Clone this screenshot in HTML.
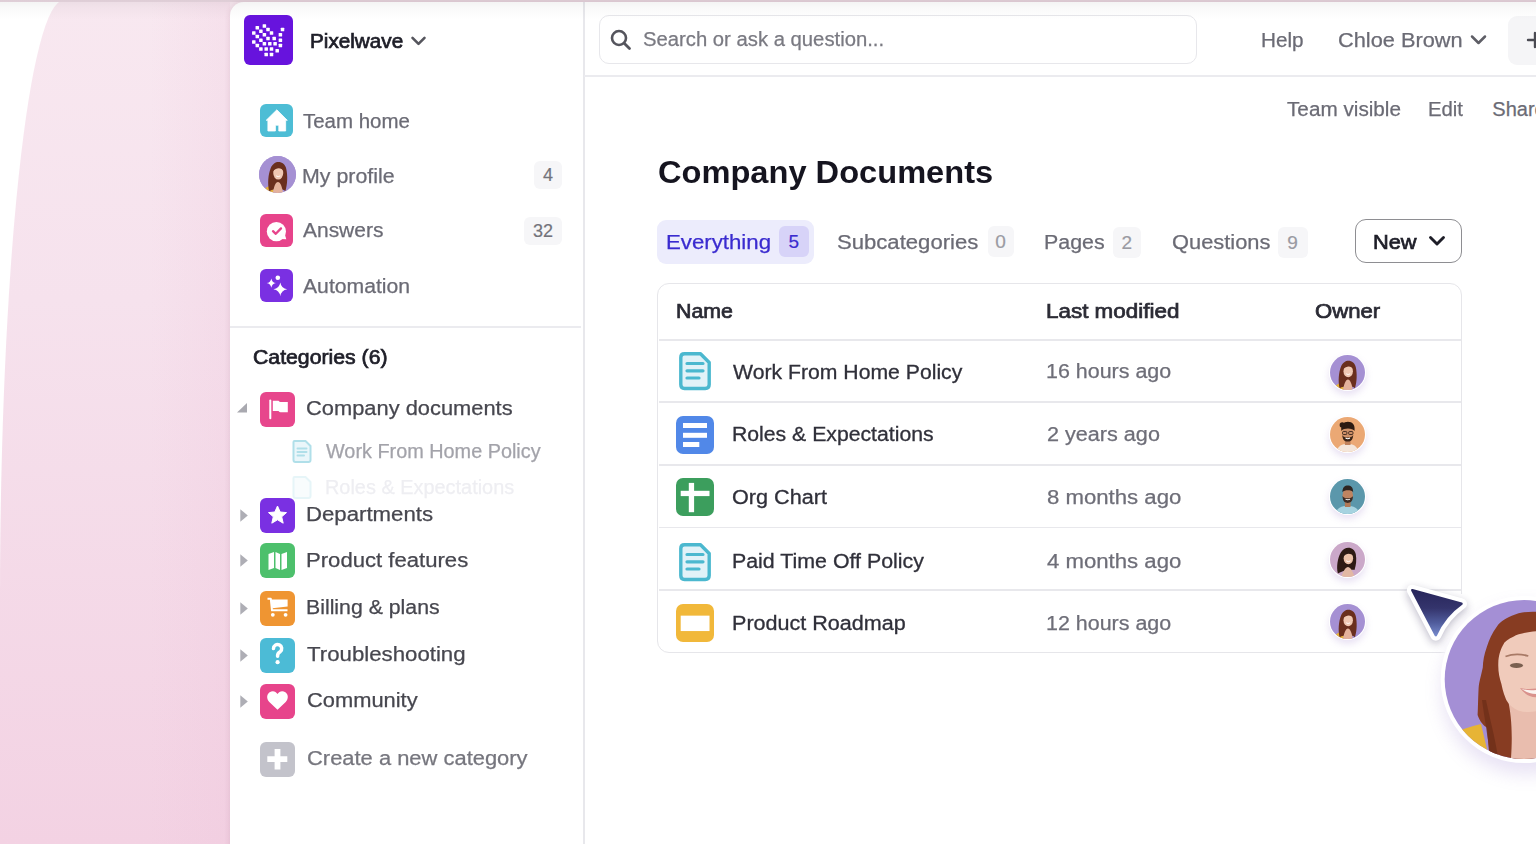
<!DOCTYPE html>
<html><head><meta charset="utf-8"><style>
*{box-sizing:border-box;margin:0;padding:0}
html,body{width:1536px;height:844px;overflow:hidden;background:#fff}
body{position:relative;font-family:"Liberation Sans",sans-serif}
#root{position:absolute;left:0;top:0;width:1536px;height:844px;overflow:hidden}
.t{position:absolute;white-space:nowrap;line-height:20px;font-size:20px;transform-origin:0 0}
.ic{position:absolute;border-radius:6px}
.ic svg,.av svg{position:absolute;left:0;top:0;width:100%;height:100%}
#pink{position:absolute;left:0;top:0;width:300px;height:844px;
 background:linear-gradient(180deg,#f8e8f0 0px,#f6e2ed 300px,#f3d2e3 844px);
 border-top-left-radius:64px 600px}
#pinkedge{position:absolute;left:150px;top:0;width:80px;height:844px;background:linear-gradient(90deg,rgba(236,190,215,0),rgba(236,190,215,.18))}
#topstrip{position:absolute;left:0;top:0;width:1536px;height:2px;background:#ead8e1}
#topshade{position:absolute;left:0;top:0;width:1536px;height:20px;background:linear-gradient(180deg,rgba(0,0,0,.05),rgba(0,0,0,.025) 40%,rgba(0,0,0,0));z-index:50}
#win{position:absolute;left:230px;top:2px;width:1400px;height:900px;background:#fff;border-top-left-radius:14px;box-shadow:-1px 0 5px rgba(120,60,90,.10)}
.ln{position:absolute;background:#ebebef}
.nav{color:#6b6b75}
.cat{color:#47474f}
.badge{position:absolute;background:#f6f6f8;border-radius:6px;color:#73737b;font-size:18px;line-height:28px;text-align:center;-webkit-text-stroke:.2px currentColor}
.av{position:absolute;border-radius:50%;overflow:hidden}
.row{color:#30303a}
.date{color:#6e6e78}
.hd{color:#2b2b35}
</style></head><body><div id="root">
<div id="pink"></div><div id="pinkedge"></div><div id="topstrip"></div><div id="win"></div>

<div class="ln" style="left:583px;top:2px;width:1.5px;height:842px;background:#e8e8ec"></div>
<div class="ln" style="left:230px;top:326px;width:351px;height:1.5px"></div>
<div class="ln" style="left:584px;top:75px;width:952px;height:1.5px"></div>

<div class="ic" style="left:244px;top:15px;width:49px;height:50px;background:#6713dd;border-radius:6px"><svg viewBox="0 0 49 50"><rect x="18.65" y="9.25" width="3.5" height="3.5" rx=".5" fill="#fff"/><rect x="11.55" y="10.95" width="3.5" height="3.5" rx=".5" fill="#fff"/><rect x="22.25" y="12.75" width="3.5" height="3.5" rx=".5" fill="#fff"/><rect x="36.75" y="12.75" width="3.5" height="3.5" rx=".5" fill="#fff"/><rect x="15.15" y="14.55" width="3.5" height="3.5" rx=".5" fill="#fff"/><rect x="8.05" y="16.25" width="3.5" height="3.5" rx=".5" fill="#fff"/><rect x="25.75" y="16.25" width="3.5" height="3.5" rx=".5" fill="#fff"/><rect x="18.65" y="18.05" width="3.5" height="3.5" rx=".5" fill="#fff"/><rect x="34.65" y="18.05" width="3.5" height="3.5" rx=".5" fill="#fff"/><rect x="11.55" y="19.85" width="3.5" height="3.5" rx=".5" fill="#fff"/><rect x="22.25" y="21.65" width="3.5" height="3.5" rx=".5" fill="#fff"/><rect x="28.45" y="21.65" width="3.5" height="3.5" rx=".5" fill="#fff"/><rect x="15.15" y="23.45" width="3.5" height="3.5" rx=".5" fill="#fff"/><rect x="34.65" y="23.45" width="3.5" height="3.5" rx=".5" fill="#fff"/><rect x="8.05" y="25.25" width="3.5" height="3.5" rx=".5" fill="#fff"/><rect x="18.65" y="26.95" width="3.5" height="3.5" rx=".5" fill="#fff"/><rect x="24.05" y="26.95" width="3.5" height="3.5" rx=".5" fill="#fff"/><rect x="29.35" y="26.95" width="3.5" height="3.5" rx=".5" fill="#fff"/><rect x="11.55" y="28.75" width="3.5" height="3.5" rx=".5" fill="#fff"/><rect x="34.65" y="28.75" width="3.5" height="3.5" rx=".5" fill="#fff"/><rect x="15.15" y="32.25" width="3.5" height="3.5" rx=".5" fill="#fff"/><rect x="20.45" y="32.25" width="3.5" height="3.5" rx=".5" fill="#fff"/><rect x="25.75" y="32.25" width="3.5" height="3.5" rx=".5" fill="#fff"/><rect x="31.45" y="34.05" width="3.5" height="3.5" rx=".5" fill="#fff"/><rect x="20.45" y="37.65" width="3.5" height="3.5" rx=".5" fill="#fff"/><rect x="25.75" y="37.65" width="3.5" height="3.5" rx=".5" fill="#fff"/></svg></div>
<svg style="position:absolute;left:410px;top:35px" width="17" height="12" viewBox="0 0 17 12"><path d="M2.5 2.8 L8.5 8.8 L14.5 2.8" fill="none" stroke="#55555d" stroke-width="2.6" stroke-linecap="round" stroke-linejoin="round"/></svg>
<div class="ic" style="left:260px;top:104px;width:33px;height:33px;background:#4dbdd5">
<svg viewBox="0 0 33 33"><path d="M16.85 5.8 L27.3 16.3 L25.65 16.3 L25.65 27 L18.8 27 L18.8 21.2 L15.4 21.2 L15.4 27 L7.9 27 L7.9 16.3 L6.2 16.3 Z" fill="#fff" stroke="#fff" stroke-width=".8" stroke-linejoin="round"/></svg></div>
<div class="av" style="left:258.5px;top:156px;width:37px;height:37px;background:#a792d2"><svg viewBox="0 0 40 40"><rect width="40" height="40" fill="#a590d3"/><path d="M3 40 C6 34 10 32 15 31.5 L16 40 Z" fill="#e6b23a"/><path d="M11 38 C9 30 10 20 12.5 13.5 C14.5 8.5 18 6.5 21 6.5 C25 6.5 28.5 9 29.5 14 C31 21 31 30 28.5 38 C26 35 16 35 11 38 Z" fill="#6a2f1e"/><path d="M15 40 C16 33 18 28 20.5 28 C23 28 25 33 26 40 Z" fill="#e4b29c"/><ellipse cx="20.8" cy="18.5" rx="5.4" ry="7" fill="#f0c8b3"/><path d="M15 16.5 C15.5 11 18 9.5 21 9.5 C24 9.5 26.5 11.5 26.8 16 C24 12.5 19 12 15 16.5 Z" fill="#6a2f1e"/><path d="M18.5 21.5 Q20.8 23.2 23 21.5" stroke="#fff" stroke-width="1" fill="none"/></svg></div>
<div class="ic" style="left:260px;top:214px;width:33px;height:33px;background:#e7448b">
<svg viewBox="0 0 33 33"><circle cx="16.4" cy="17.6" r="9.6" fill="#fff"/><path d="M20 25 L26.3 25.3 L24.6 19.5 Z" fill="#fff"/><path d="M13 17.2 L15.8 19.8 L21 14.4" fill="none" stroke="#e7448b" stroke-width="2.3" stroke-linecap="round" stroke-linejoin="round"/></svg></div>
<div class="ic" style="left:260px;top:269px;width:33px;height:33px;background:#7a30e2">
<svg viewBox="0 0 33 33"><path d="M20.3 13.4 Q21.3 19.3 27.2 20.3 Q21.3 21.3 20.3 27.2 Q19.3 21.3 13.4 20.3 Q19.3 19.3 20.3 13.4 Z" fill="#fff"/><path d="M11.3 9.4 Q12 13.4 16 14.1 Q12 14.8 11.3 18.8 Q10.6 14.8 6.6 14.1 Q10.6 13.4 11.3 9.4 Z" fill="#fff"/><circle cx="17.8" cy="8.8" r="2.3" fill="#fff"/></svg></div>
<div class="badge" style="left:534px;top:161px;width:28px;height:28px">4</div>
<div class="badge" style="left:524px;top:216.5px;width:38px;height:28px">32</div>

<svg style="position:absolute;left:235px;top:402px" width="14" height="12" viewBox="0 0 14 12"><path d="M12 1 L12 10.5 L2 10.5 Z" fill="#a9a9b0"/></svg>
<div class="ic" style="left:259.5px;top:392px;width:35px;height:35px;background:#e7468c">
<svg viewBox="0 0 35 35"><rect x="9.3" y="7.5" width="2" height="19.7" rx="1" fill="#fff"/><path d="M12.8 8.7 L18.5 8.7 Q19.5 10 20.5 10 L27.8 10 L27.8 20.2 L20.5 20.2 Q19.5 20.2 18.5 19 L12.8 19 Z" fill="#fff"/></svg></div>
<svg style="position:absolute;left:291px;top:438.5px" width="22" height="25" viewBox="0 0 22 25"><path d="M3.5 2 L14.5 2 L19.5 7 L19.5 21 Q19.5 23 17.5 23 L4.5 23 Q2.5 23 2.5 21 L2.5 3 Q2.5 2 3.5 2 Z" fill="#eaf6fa" stroke="#b0dfe9" stroke-width="2"/><path d="M6.5 9.5 H15.5 M6.5 13 H15.5 M6.5 16.5 H13" stroke="#b0dfe9" stroke-width="2" stroke-linecap="round"/></svg>
<svg style="position:absolute;left:291px;top:474.5px;opacity:.3" width="22" height="25" viewBox="0 0 22 25"><path d="M3.5 2 L14.5 2 L19.5 7 L19.5 21 Q19.5 23 17.5 23 L4.5 23 Q2.5 23 2.5 21 L2.5 3 Q2.5 2 3.5 2 Z" fill="#eaf6fa" stroke="#b0dfe9" stroke-width="2"/></svg>

<svg style="position:absolute;left:238px;top:508.0px" width="12" height="15" viewBox="0 0 12 15"><path d="M2.3 1.3 L9.8 7.5 L2.3 13.7 Z" fill="#aeaeb5"/></svg>
<div class="ic" style="left:260px;top:498px;width:35px;height:35px;background:#7a30e2"><svg viewBox="0 0 35 35"><path d="M17.5 8 L20.2 14 L26.5 14.6 L21.7 18.8 L23.2 25.2 L17.5 21.8 L11.8 25.2 L13.3 18.8 L8.5 14.6 L14.8 14 Z" fill="#fff" stroke="#fff" stroke-width="1" stroke-linejoin="round"/></svg></div>
<svg style="position:absolute;left:238px;top:553.4px" width="12" height="15" viewBox="0 0 12 15"><path d="M2.3 1.3 L9.8 7.5 L2.3 13.7 Z" fill="#aeaeb5"/></svg>
<div class="ic" style="left:260px;top:543.4px;width:35px;height:35px;background:#4dc06c"><svg viewBox="0 0 35 35"><path d="M8.5 11 L14 9 L14 25 L8.5 27 Z M15.5 9 L20 11 L20 27 L15.5 25 Z M21.5 11 L27 9 L27 25 L21.5 27 Z" fill="#fff"/></svg></div>
<svg style="position:absolute;left:238px;top:600.8px" width="12" height="15" viewBox="0 0 12 15"><path d="M2.3 1.3 L9.8 7.5 L2.3 13.7 Z" fill="#aeaeb5"/></svg>
<div class="ic" style="left:260px;top:590.8px;width:35px;height:35px;background:#ef9532"><svg viewBox="0 0 35 35"><path d="M7.5 7.8 H10.8 L12 19.3 H27.5" fill="none" stroke="#fff" stroke-width="2" stroke-linejoin="round"/><path d="M11 8.4 H27.6 V15.6 L12.3 17.2 Z" fill="#fff"/><circle cx="12.8" cy="23.8" r="1.9" fill="#fff"/><circle cx="25.6" cy="23.8" r="1.9" fill="#fff"/></svg></div>
<svg style="position:absolute;left:238px;top:648.0px" width="12" height="15" viewBox="0 0 12 15"><path d="M2.3 1.3 L9.8 7.5 L2.3 13.7 Z" fill="#aeaeb5"/></svg>
<div class="ic" style="left:260px;top:638px;width:35px;height:35px;background:#4cbbd6"><svg viewBox="0 0 35 35"><path d="M13.5 10.6 A4.1 4.1 0 1 1 20.2 13.7 Q17.6 15.2 17.6 17.6 V18.2" fill="none" stroke="#fff" stroke-width="3.5" stroke-linecap="round"/><circle cx="17.6" cy="24.2" r="2.1" fill="#fff"/></svg></div>
<svg style="position:absolute;left:238px;top:694.0px" width="12" height="15" viewBox="0 0 12 15"><path d="M2.3 1.3 L9.8 7.5 L2.3 13.7 Z" fill="#aeaeb5"/></svg>
<div class="ic" style="left:260px;top:684px;width:35px;height:35px;background:#e7448b"><svg viewBox="0 0 35 35"><path d="M17.5 25.8 L9.3 17.9 C6.4 15 6.5 10.5 9.6 8.3 C12.6 6.2 15.8 7.3 17.5 10 C19.2 7.3 22.4 6.2 25.4 8.3 C28.5 10.5 28.6 15 25.7 17.9 Z" fill="#fff"/></svg></div>
<div class="ic" style="left:260px;top:742px;width:35px;height:35px;background:#c3c3cb"><svg viewBox="0 0 35 35"><path d="M17.5 7 V27.5 M7.3 17.2 H27.3" stroke="#fff" stroke-width="5.8"/></svg></div>
<div style="position:absolute;left:599px;top:14.5px;width:597.5px;height:49.5px;border:1.5px solid #e7e7eb;border-radius:10px;background:#fff"></div>
<svg style="position:absolute;left:609px;top:28px" width="24" height="24" viewBox="0 0 24 24"><circle cx="10" cy="10" r="7" fill="none" stroke="#55555d" stroke-width="2.6"/><path d="M15.2 15.2 L20.5 20.5" stroke="#55555d" stroke-width="2.8" stroke-linecap="round"/></svg>
<svg style="position:absolute;left:1470px;top:34px" width="17" height="12" viewBox="0 0 17 12"><path d="M2 2.5 L8.5 9 L15 2.5" fill="none" stroke="#5e5e66" stroke-width="2.5" stroke-linecap="round" stroke-linejoin="round"/></svg>
<div style="position:absolute;left:1508px;top:16px;width:60px;height:48.5px;background:#f5f5f7;border-radius:9px"></div>
<svg style="position:absolute;left:1526px;top:31px" width="18" height="18" viewBox="0 0 18 18"><path d="M9 2 V16 M2 9 H16" stroke="#4a4a52" stroke-width="2.4" stroke-linecap="round"/></svg>

<div style="position:absolute;left:657px;top:220px;width:157px;height:43.5px;background:#ececfc;border-radius:9px"></div>
<div class="badge" style="left:778.5px;top:226px;width:30.5px;height:31px;background:#d7d3f8;color:#3a2bcf;font-size:19px;line-height:31px">5</div>
<div class="badge" style="left:987.5px;top:226px;width:26px;height:31px;font-size:19px;line-height:31px;color:#9a9aa2">0</div>
<div class="badge" style="left:1112.5px;top:226.5px;width:28.5px;height:31px;font-size:19px;line-height:31px;color:#9a9aa2">2</div>
<div class="badge" style="left:1277.5px;top:226.5px;width:30px;height:31px;font-size:19px;line-height:31px;color:#9a9aa2">9</div>
<div style="position:absolute;left:1354.8px;top:219.3px;width:107.5px;height:44.2px;border:1.8px solid #8e8e92;border-radius:11px"></div>
<svg style="position:absolute;left:1428px;top:235px" width="18" height="12" viewBox="0 0 18 12"><path d="M2.5 2.5 L9 9 L15.5 2.5" fill="none" stroke="#1e1e28" stroke-width="2.9" stroke-linecap="round" stroke-linejoin="round"/></svg>

<div style="position:absolute;left:657.3px;top:282.6px;width:805px;height:370.4px;border:1.6px solid #e6e6ea;border-radius:12px"></div>
<div class="ln" style="left:659px;top:339px;width:802px;height:1.5px;background:#e8e8ec"></div>
<div class="ln" style="left:659px;top:401.3px;width:802px;height:1.5px;background:#e8e8ec"></div>
<div class="ln" style="left:659px;top:464px;width:802px;height:1.5px;background:#e8e8ec"></div>
<div class="ln" style="left:659px;top:526.5px;width:802px;height:1.5px;background:#e8e8ec"></div>
<div class="ln" style="left:659px;top:589.2px;width:802px;height:1.5px;background:#e8e8ec"></div>
<svg style="position:absolute;left:678px;top:350.5px" width="34" height="40" viewBox="0 0 34 40"><path d="M6.5 2.8 L22.5 2.8 L31.2 11.5 L31.2 33.5 Q31.2 37.5 27.2 37.5 L6.5 37.5 Q2.8 37.5 2.8 33.5 L2.8 6.5 Q2.8 2.8 6.5 2.8 Z" fill="#e1f2f8" stroke="#4bb8cf" stroke-width="3.4" stroke-linejoin="round"/><path d="M9 12.5 H25 M9 19.8 H25 M9 27 H21" stroke="#4bb8cf" stroke-width="3.2" stroke-linecap="round"/></svg>
<div class="ic" style="left:676px;top:416px;width:38px;height:38px;background:#5188e8;border-radius:7px"><svg viewBox="0 0 38 38"><rect x="7" y="7" width="24" height="5" fill="#fff"/><rect x="7" y="16.8" width="24" height="5" fill="#fff"/><rect x="7" y="26" width="16.3" height="5" fill="#fff"/></svg></div>
<div class="ic" style="left:676px;top:477.5px;width:38px;height:38px;background:#3c9e5d;border-radius:7px"><svg viewBox="0 0 38 38"><rect x="12.8" y="4.9" width="5.3" height="29.3" fill="#fff"/><rect x="4.7" y="12.8" width="28.8" height="5.3" fill="#fff"/></svg></div>
<svg style="position:absolute;left:678px;top:541.5px" width="34" height="40" viewBox="0 0 34 40"><path d="M6.5 2.8 L22.5 2.8 L31.2 11.5 L31.2 33.5 Q31.2 37.5 27.2 37.5 L6.5 37.5 Q2.8 37.5 2.8 33.5 L2.8 6.5 Q2.8 2.8 6.5 2.8 Z" fill="#e1f2f8" stroke="#4bb8cf" stroke-width="3.4" stroke-linejoin="round"/><path d="M9 12.5 H25 M9 19.8 H25 M9 27 H21" stroke="#4bb8cf" stroke-width="3.2" stroke-linecap="round"/></svg>
<div class="ic" style="left:676px;top:603.5px;width:38px;height:38.5px;background:#f1b83a;border-radius:7px"><svg viewBox="0 0 38 38"><rect x="4.7" y="11.4" width="28.8" height="15.4" fill="#fff"/></svg></div>
<div class="av" style="left:1329px;top:353.8px;width:37px;height:37px;border:1.5px solid #fff;box-shadow:0 4px 7px rgba(150,120,200,.22)"><svg viewBox="0 0 40 40"><rect width="40" height="40" fill="#a590d3"/><path d="M3 40 C6 34 10 32 15 31.5 L16 40 Z" fill="#e6b23a"/><path d="M11 38 C9 30 10 20 12.5 13.5 C14.5 8.5 18 6.5 21 6.5 C25 6.5 28.5 9 29.5 14 C31 21 31 30 28.5 38 C26 35 16 35 11 38 Z" fill="#6a2f1e"/><path d="M15 40 C16 33 18 28 20.5 28 C23 28 25 33 26 40 Z" fill="#e4b29c"/><ellipse cx="20.8" cy="18.5" rx="5.4" ry="7" fill="#f0c8b3"/><path d="M15 16.5 C15.5 11 18 9.5 21 9.5 C24 9.5 26.5 11.5 26.8 16 C24 12.5 19 12 15 16.5 Z" fill="#6a2f1e"/><path d="M18.5 21.5 Q20.8 23.2 23 21.5" stroke="#fff" stroke-width="1" fill="none"/></svg></div>
<div class="av" style="left:1329px;top:415.5px;width:37px;height:37px;border:1.5px solid #fff;box-shadow:0 4px 7px rgba(150,120,200,.22)"><svg viewBox="0 0 40 40"><rect width="40" height="40" fill="#eba874"/><path d="M7 40 C9 33 14 30.5 20 30.5 C26 30.5 31 33 33 40 Z" fill="#f4e6da"/><rect x="17" y="25" width="6.5" height="7" fill="#c0825c"/><ellipse cx="20.3" cy="19" rx="6.3" ry="7.8" fill="#cf9168"/><path d="M13 16 C12 9 15.5 5.5 20.5 5.5 C25.5 5.5 29 8.5 28 16 C26 12.5 16 12 13 16 Z" fill="#2c1a12"/><circle cx="14" cy="9" r="3" fill="#2c1a12"/><path d="M14 20.5 C14.5 27.5 17.5 28 20.3 28 C23 28 26 27.5 26.6 20.5 C24.5 24.5 16 24.5 14 20.5 Z" fill="#3a2416"/><rect x="14.3" y="16.6" width="5" height="3.4" rx="1.2" fill="none" stroke="#231510" stroke-width=".9"/><rect x="21.3" y="16.6" width="5" height="3.4" rx="1.2" fill="none" stroke="#231510" stroke-width=".9"/><path d="M17.8 24 Q20.3 25.6 22.8 24" stroke="#fff" stroke-width="1.2" fill="none"/></svg></div>
<div class="av" style="left:1329px;top:477.9px;width:37px;height:37px;border:1.5px solid #fff;box-shadow:0 4px 7px rgba(150,120,200,.22)"><svg viewBox="0 0 40 40"><rect width="40" height="40" fill="#5b97ab"/><path d="M6 40 C8 33 13 30.5 20 30.5 C27 30.5 32 33 34 40 Z" fill="#a6d3e0"/><rect x="17" y="25" width="6.5" height="7" fill="#b27a58"/><ellipse cx="20.3" cy="18.5" rx="6" ry="7.8" fill="#bf8460"/><path d="M14.2 15 C14.2 9.5 17 7.5 20.3 7.5 C23.8 7.5 26.5 9.5 26.5 15 C24.5 12 16.5 12 14.2 15 Z" fill="#2e2420"/><path d="M14.3 19.5 C14.5 26.5 17.5 27.3 20.3 27.3 C23 27.3 26 26.5 26.3 19.5 C24.5 23 16 23 14.3 19.5 Z" fill="#3b2c25"/><path d="M17.8 23 Q20.3 24.6 22.8 23" stroke="#fff" stroke-width="1.2" fill="none"/></svg></div>
<div class="av" style="left:1329px;top:540.5px;width:37px;height:37px;border:1.5px solid #fff;box-shadow:0 4px 7px rgba(150,120,200,.22)"><svg viewBox="0 0 40 40"><rect width="40" height="40" fill="#cba8c9"/><path d="M9 36 C7 28 9 18 12 12.5 C14 8.5 18 6.5 21 6.5 C25 6.5 28.5 9 29.5 14 C30.5 20 30 26 28 32 C24 31 14 33 9 36 Z" fill="#2e1a14"/><path d="M13 40 C15 33 18 28.5 20.5 28.5 C23 28.5 26 33 28 40 Z" fill="#e2b8a4"/><ellipse cx="21" cy="18.5" rx="5.4" ry="7" fill="#ecc1a8"/><path d="M15.2 17 C15 11.5 18 9.5 21 9.5 C24.5 9.5 27 12 26.7 16 C23.5 12.5 18.5 12.5 15.2 17 Z" fill="#2e1a14"/><path d="M18.5 21.5 Q21 23.5 23.5 21.5" stroke="#fff" stroke-width="1.1" fill="none"/></svg></div>
<div class="av" style="left:1329px;top:603.0px;width:37px;height:37px;border:1.5px solid #fff;box-shadow:0 4px 7px rgba(150,120,200,.22)"><svg viewBox="0 0 40 40"><rect width="40" height="40" fill="#a590d3"/><path d="M3 40 C6 34 10 32 15 31.5 L16 40 Z" fill="#e6b23a"/><path d="M11 38 C9 30 10 20 12.5 13.5 C14.5 8.5 18 6.5 21 6.5 C25 6.5 28.5 9 29.5 14 C31 21 31 30 28.5 38 C26 35 16 35 11 38 Z" fill="#6a2f1e"/><path d="M15 40 C16 33 18 28 20.5 28 C23 28 25 33 26 40 Z" fill="#e4b29c"/><ellipse cx="20.8" cy="18.5" rx="5.4" ry="7" fill="#f0c8b3"/><path d="M15 16.5 C15.5 11 18 9.5 21 9.5 C24 9.5 26.5 11.5 26.8 16 C24 12.5 19 12 15 16.5 Z" fill="#6a2f1e"/><path d="M18.5 21.5 Q20.8 23.2 23 21.5" stroke="#fff" stroke-width="1" fill="none"/></svg></div>
<div class="t " style="left:309.5px;top:30.5px;font-size:20px;line-height:20px;color:#1e1e28;transform:scaleX(1.0350);-webkit-text-stroke:0.7px currentColor;">Pixelwave</div>
<div class="t nav" style="left:303.1px;top:110.5px;font-size:20px;line-height:20px;transform:scaleX(1.0230);-webkit-text-stroke:0.25px currentColor;">Team home</div>
<div class="t nav" style="left:301.5px;top:165.6px;font-size:20px;line-height:20px;transform:scaleX(1.0680);-webkit-text-stroke:0.25px currentColor;">My profile</div>
<div class="t nav" style="left:303.0px;top:220.0px;font-size:20px;line-height:20px;transform:scaleX(1.0482);-webkit-text-stroke:0.25px currentColor;">Answers</div>
<div class="t nav" style="left:303.0px;top:276.0px;font-size:20px;line-height:20px;transform:scaleX(1.0586);-webkit-text-stroke:0.25px currentColor;">Automation</div>
<div class="t " style="left:252.5px;top:348.2px;font-size:19.5px;line-height:19.5px;color:#1e1e28;transform:scaleX(1.0890);-webkit-text-stroke:0.7px currentColor;">Categories (6)</div>
<div class="t cat" style="left:306.0px;top:397.6px;font-size:20px;line-height:20px;transform:scaleX(1.0932);-webkit-text-stroke:0.25px currentColor;">Company documents</div>
<div class="t " style="left:325.8px;top:441.0px;font-size:20px;line-height:20px;color:#a3a3aa;transform:scaleX(0.9920);-webkit-text-stroke:0.25px currentColor;">Work From Home Policy</div>
<div class="t " style="left:324.5px;top:477.0px;font-size:20px;line-height:20px;color:#eeeef2;transform:scaleX(0.9952);-webkit-text-stroke:0.25px currentColor;">Roles &amp; Expectations</div>
<div class="t cat" style="left:305.9px;top:503.7px;font-size:20px;line-height:20px;transform:scaleX(1.1092);-webkit-text-stroke:0.25px currentColor;">Departments</div>
<div class="t cat" style="left:306.3px;top:549.8px;font-size:20px;line-height:20px;transform:scaleX(1.1053);-webkit-text-stroke:0.25px currentColor;">Product features</div>
<div class="t cat" style="left:306.3px;top:596.8px;font-size:20px;line-height:20px;transform:scaleX(1.0635);-webkit-text-stroke:0.25px currentColor;">Billing &amp; plans</div>
<div class="t cat" style="left:307.4px;top:644.0px;font-size:20px;line-height:20px;transform:scaleX(1.1115);-webkit-text-stroke:0.25px currentColor;">Troubleshooting</div>
<div class="t cat" style="left:306.8px;top:689.6px;font-size:20px;line-height:20px;transform:scaleX(1.0935);-webkit-text-stroke:0.25px currentColor;">Community</div>
<div class="t " style="left:306.8px;top:748.0px;font-size:20px;line-height:20px;color:#76767e;transform:scaleX(1.0962);-webkit-text-stroke:0.25px currentColor;">Create a new category</div>
<div class="t " style="left:642.5px;top:29.3px;font-size:20px;line-height:20px;color:#7a7a82;transform:scaleX(1.0134);-webkit-text-stroke:0.25px currentColor;">Search or ask a question...</div>
<div class="t nav" style="left:1260.8px;top:30.0px;font-size:20px;line-height:20px;transform:scaleX(1.0355);-webkit-text-stroke:0.25px currentColor;">Help</div>
<div class="t nav" style="left:1338.4px;top:30.0px;font-size:20px;line-height:20px;transform:scaleX(1.0881);-webkit-text-stroke:0.25px currentColor;">Chloe Brown</div>
<div class="t nav" style="left:1286.9px;top:99.0px;font-size:20px;line-height:20px;transform:scaleX(1.0359);-webkit-text-stroke:0.25px currentColor;">Team visible</div>
<div class="t nav" style="left:1428.3px;top:99.0px;font-size:20px;line-height:20px;transform:scaleX(1.0154);-webkit-text-stroke:0.25px currentColor;">Edit</div>
<div class="t nav" style="left:1492.3px;top:99.0px;font-size:20px;line-height:20px;-webkit-text-stroke:0.25px currentColor;">Share</div>
<div class="t " style="left:657.6px;top:156.7px;font-size:31px;line-height:31px;font-weight:700;color:#15141f;transform:scaleX(1.0518);">Company Documents</div>
<div class="t " style="left:665.7px;top:231.9px;font-size:20px;line-height:20px;color:#3a2bcf;transform:scaleX(1.1111);-webkit-text-stroke:0.25px currentColor;">Everything</div>
<div class="t nav" style="left:837.0px;top:231.9px;font-size:20px;line-height:20px;transform:scaleX(1.1050);-webkit-text-stroke:0.25px currentColor;">Subcategories</div>
<div class="t nav" style="left:1044.0px;top:231.9px;font-size:20px;line-height:20px;transform:scaleX(1.0684);-webkit-text-stroke:0.25px currentColor;">Pages</div>
<div class="t nav" style="left:1171.7px;top:231.9px;font-size:20px;line-height:20px;transform:scaleX(1.0926);-webkit-text-stroke:0.25px currentColor;">Questions</div>
<div class="t " style="left:1373.4px;top:231.9px;font-size:20px;line-height:20px;color:#1e1e28;transform:scaleX(1.0896);-webkit-text-stroke:0.7px currentColor;">New</div>
<div class="t hd" style="left:675.8px;top:301.8px;font-size:19.5px;line-height:19.5px;transform:scaleX(1.0947);-webkit-text-stroke:0.7px currentColor;">Name</div>
<div class="t hd" style="left:1046.1px;top:302.4px;font-size:19.5px;line-height:19.5px;transform:scaleX(1.1498);-webkit-text-stroke:0.7px currentColor;">Last modified</div>
<div class="t hd" style="left:1314.7px;top:302.4px;font-size:19.5px;line-height:19.5px;transform:scaleX(1.1345);-webkit-text-stroke:0.7px currentColor;">Owner</div>
<div class="t row" style="left:733.1px;top:361.5px;font-size:20px;line-height:20px;transform:scaleX(1.0600);-webkit-text-stroke:0.25px currentColor;-webkit-text-stroke:0.3px #30303a">Work From Home Policy</div>
<div class="t date" style="left:1045.6px;top:361.0px;font-size:20px;line-height:20px;transform:scaleX(1.0722);-webkit-text-stroke:0.25px currentColor;">16 hours ago</div>
<div class="t row" style="left:731.8px;top:424.0px;font-size:20px;line-height:20px;transform:scaleX(1.0604);-webkit-text-stroke:0.25px currentColor;-webkit-text-stroke:0.3px #30303a">Roles &amp; Expectations</div>
<div class="t date" style="left:1047.0px;top:423.5px;font-size:20px;line-height:20px;transform:scaleX(1.0802);-webkit-text-stroke:0.25px currentColor;">2 years ago</div>
<div class="t row" style="left:732.3px;top:487.3px;font-size:20px;line-height:20px;transform:scaleX(1.0807);-webkit-text-stroke:0.25px currentColor;-webkit-text-stroke:0.3px #30303a">Org Chart</div>
<div class="t date" style="left:1046.8px;top:486.8px;font-size:20px;line-height:20px;transform:scaleX(1.1081);-webkit-text-stroke:0.25px currentColor;">8 months ago</div>
<div class="t row" style="left:731.8px;top:551.2px;font-size:20px;line-height:20px;transform:scaleX(1.0679);-webkit-text-stroke:0.25px currentColor;-webkit-text-stroke:0.3px #30303a">Paid Time Off Policy</div>
<div class="t date" style="left:1047.2px;top:550.7px;font-size:20px;line-height:20px;transform:scaleX(1.1081);-webkit-text-stroke:0.25px currentColor;">4 months ago</div>
<div class="t row" style="left:731.8px;top:613.0px;font-size:20px;line-height:20px;transform:scaleX(1.0781);-webkit-text-stroke:0.25px currentColor;-webkit-text-stroke:0.3px #30303a">Product Roadmap</div>
<div class="t date" style="left:1045.6px;top:612.5px;font-size:20px;line-height:20px;transform:scaleX(1.0722);-webkit-text-stroke:0.25px currentColor;">12 hours ago</div>
<div style="position:absolute;left:1440px;top:594px;width:26px;height:62px;background:linear-gradient(90deg,rgba(255,255,255,0),#fff 30%)"></div>
<svg style="position:absolute;left:1380px;top:560px" width="156" height="284" viewBox="1380 560 156 284">
<defs>
<clipPath id="bc"><circle cx="1524.2" cy="679.5" r="79.5"/></clipPath>
<filter id="bsh" x="-50%" y="-50%" width="200%" height="200%"><feGaussianBlur stdDeviation="9"/></filter>
<linearGradient id="cg" x1="0" y1="589" x2="0" y2="637" gradientUnits="userSpaceOnUse"><stop offset="0" stop-color="#27255a"/><stop offset=".4" stop-color="#34346c"/><stop offset=".7" stop-color="#505c9c"/><stop offset="1" stop-color="#7a8ed0"/></linearGradient>
<filter id="cs" x="-40%" y="-40%" width="180%" height="180%"><feGaussianBlur stdDeviation="4"/></filter>
</defs>
<circle cx="1526" cy="690" r="84" fill="#8c6ec8" opacity=".2" filter="url(#bsh)"/>
<circle cx="1524.2" cy="679.5" r="83.5" fill="#fff"/>
<g clip-path="url(#bc)">
<rect x="1440" y="596" width="100" height="170" fill="#a48fd5"/>
<path d="M1440 733 Q1452 730 1462 729.6 Q1472 726 1481 724 L1492 770 L1440 770 Z" fill="#e7b435"/>
<path d="M1540 612 C1530 611 1520 612 1511.8 615.7 C1504 619 1500 622 1497.3 626 C1492 633 1489 640 1486.9 646.8 C1484 655 1483 661 1482.8 667.5 C1481 676 1479 682 1478.6 688.2 C1478 700 1478 708 1477.6 715 C1480 722 1484 726 1486.9 727.5 C1488 740 1489 748 1490 770 L1540 770 Z" fill="#873c22"/>
<path d="M1482 700 C1484 715 1487 730 1492 770 L1500 770 C1496 740 1490 720 1486 700 Z" fill="#6e2e19" opacity=".8"/>
<path d="M1508 700 C1512 718 1513 740 1510 770 L1540 770 L1540 700 Z" fill="#e9bdae"/>
<path d="M1540 631 C1530 631 1518 634 1513.8 636.4 C1508 639 1506 641 1504.5 642.6 C1500 650 1498.5 656 1498.3 663.3 C1498 672 1499.5 678 1501.4 684 C1503 692 1505 697 1506.6 700.6 C1510 706 1515 710 1520 711 C1528 713 1535 712 1540 710 Z" fill="#f0cbbb"/>
<path d="M1505.5 656.5 Q1516 652.5 1528.3 656" stroke="#a87a66" stroke-width="1.8" fill="none"/>
<ellipse cx="1516.5" cy="665.5" rx="6.5" ry="2.6" fill="#7a6050"/>
<path d="M1520 688 Q1528 690 1540 688 L1540 697 Q1528 699 1520 688 Z" fill="#d9928c"/>
<path d="M1521.5 688.8 Q1529 691.5 1540 689.5 L1540 694 Q1529 695 1521.5 688.8 Z" fill="#fbf3ef"/>
</g>
<path d="M1412.3 590.2 L1461.5 603.7 Q1444.3 615.8 1435.8 635.2 Z" fill="#2a2050" opacity=".30" stroke="#2a2050" stroke-width="11" stroke-linejoin="round" filter="url(#cs)" transform="translate(0,3)"/>
<path d="M1412.3 590.2 L1461.5 603.7 Q1444.3 615.8 1435.8 635.2 Z" fill="#fff" stroke="#fff" stroke-width="11" stroke-linejoin="round"/>
<path d="M1412.3 590.2 L1461.5 603.7 Q1444.3 615.8 1435.8 635.2 Z" fill="url(#cg)" stroke="url(#cg)" stroke-width="2.5" stroke-linejoin="round"/>
</svg>
<div id="topshade"></div>
</div></body></html>
